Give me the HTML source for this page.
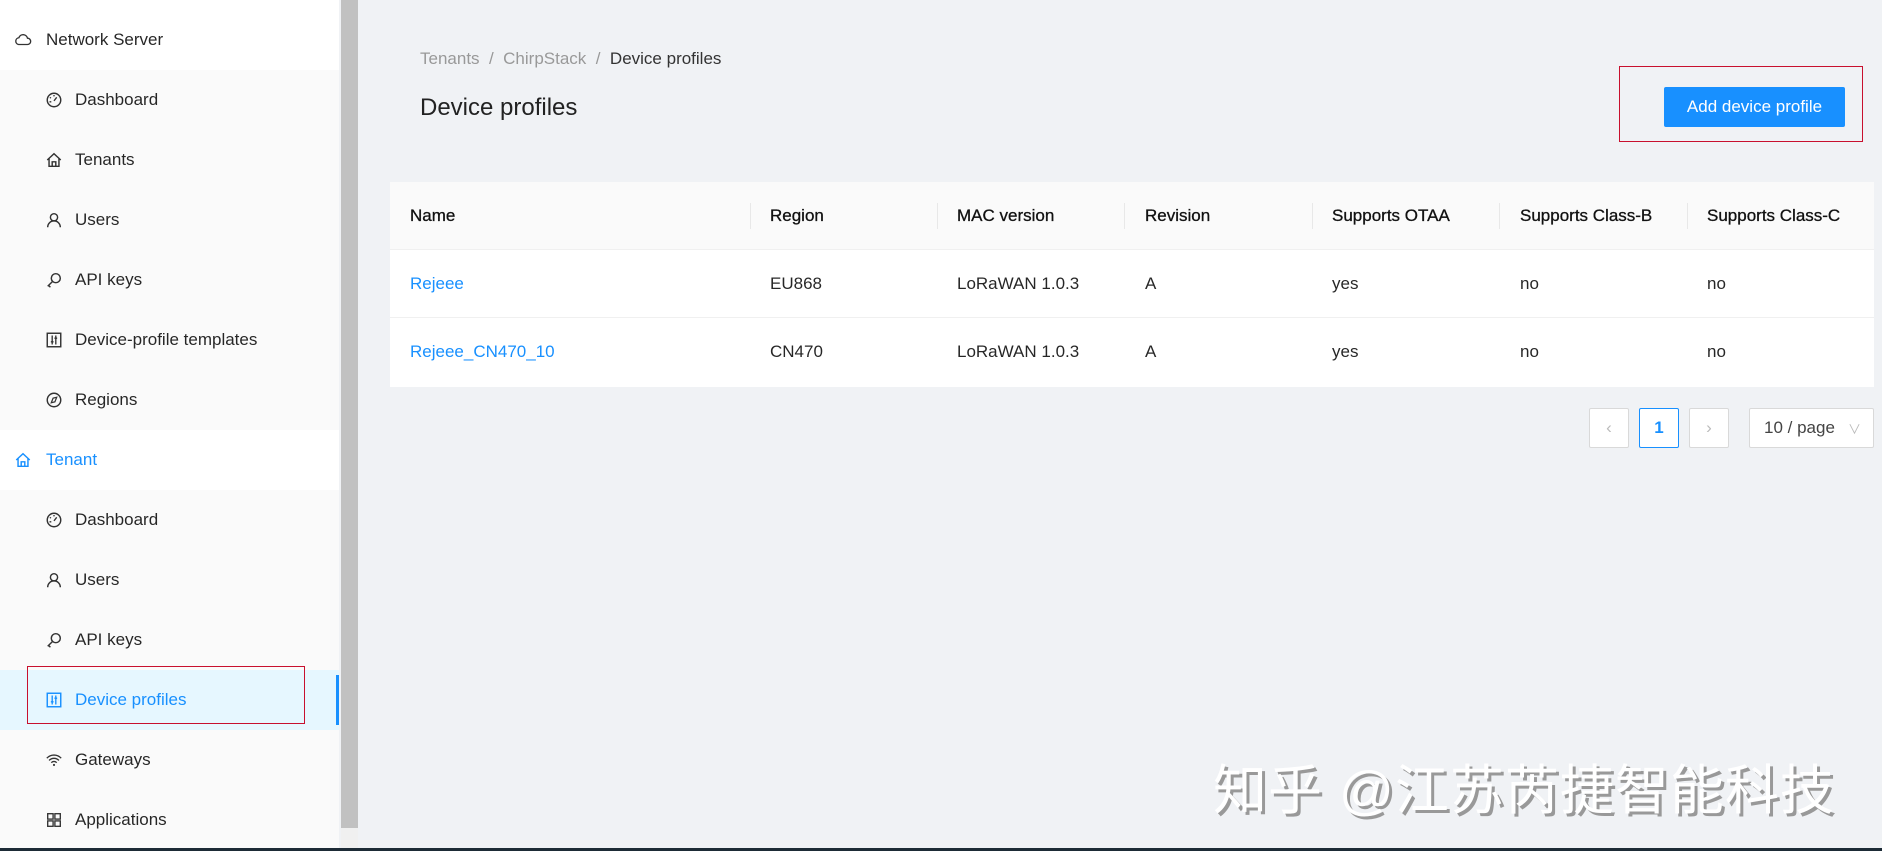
<!DOCTYPE html>
<html><head><meta charset="utf-8"><style>
*{box-sizing:border-box;margin:0;padding:0}
body{width:1882px;height:851px;overflow:hidden;background:#f0f2f5;font-family:"Liberation Sans","Noto Sans CJK SC",sans-serif;color:rgba(0,0,0,.85);position:relative;font-size:17px}
.side{position:absolute;left:0;top:0;width:339px;height:848px;background:#fafafa}
.hdr{position:absolute;left:0;width:339px;height:70px;background:#fff;display:flex;align-items:center;padding-left:14px}
.item{position:absolute;left:0;width:339px;height:60px;display:flex;align-items:center;padding-left:45px}
.ic{width:18px;height:18px;margin-right:12px;flex:none}
.hdr .ic{margin-right:14px}
.sb{position:absolute;left:341px;top:0;width:17px;height:848px;background:#f0f0f0}
.sb div{position:absolute;left:0;top:0;width:17px;height:828px;background:#c1c1c1}
.abs{position:absolute}
.tbl{position:absolute;left:390px;top:182px;width:1484px;background:#fff}
.row{position:absolute;left:0;width:1484px;border-bottom:1px solid #f0f0f0}
.c{position:absolute;top:0;height:100%;display:flex;align-items:center}
.sep{position:absolute;width:1px;height:26px;top:21px;background:#e8e8e8}
.pg{position:absolute;top:408px;height:40px;width:40px;border:1px solid #d9d9d9;background:#fff;border-radius:2px;display:flex;align-items:center;justify-content:center;color:#bbb}
</style></head><body>
<div class="side">
 <div class="hdr" style="top:0;padding-top:10px"><svg class="ic" viewBox="0 0 20 20"><path d="M5 15h10a3.5 3.5 0 0 0 0-7 5 5 0 0 0-9.6-.5A3.8 3.8 0 0 0 5 15z" fill="none" stroke="#333" stroke-width="1.5"/></svg>Network Server</div>
 <div class="item" style="top:70px"><svg class="ic" viewBox="0 0 20 20"><circle cx="10" cy="10" r="7.5" fill="none" stroke="#333" stroke-width="1.6"/><path d="M10 11l3-4M5 12h2M10 4.5v1.5M5.5 7l1 1" stroke="#333" stroke-width="1.5"/></svg>Dashboard</div>
 <div class="item" style="top:130px"><svg class="ic" viewBox="0 0 20 20"><path d="M2.5 10L10 3l7.5 7M4.5 8.5V17h11V8.5M8 17v-5h4v5" fill="none" stroke="#333" stroke-width="1.6"/></svg>Tenants</div>
 <div class="item" style="top:190px"><svg class="ic" viewBox="0 0 20 20"><circle cx="10" cy="7" r="4" fill="none" stroke="#333" stroke-width="1.6"/><path d="M3 18a7 7 0 0 1 14 0" fill="none" stroke="#333" stroke-width="1.6"/></svg>Users</div>
 <div class="item" style="top:250px"><svg class="ic" viewBox="0 0 20 20"><circle cx="12" cy="8" r="5" fill="none" stroke="#333" stroke-width="1.6"/><path d="M8.5 11.5L3 17M4 16l2 2" stroke="#333" stroke-width="1.6"/></svg>API keys</div>
 <div class="item" style="top:310px"><svg class="ic" viewBox="0 0 20 20"><rect x="2.5" y="2.5" width="15" height="15" fill="none" stroke="#333" stroke-width="1.6"/><path d="M8 5v10M12 5v10M6.5 12h3M10.5 8h3" stroke="#333" stroke-width="1.5"/></svg>Device-profile templates</div>
 <div class="item" style="top:370px"><svg class="ic" viewBox="0 0 20 20"><circle cx="10" cy="10" r="7.5" fill="none" stroke="#333" stroke-width="1.6"/><path d="M13 7l-2 5-4 1 2-5z" fill="none" stroke="#333" stroke-width="1.4"/></svg>Regions</div>
 <div class="hdr" style="top:430px;height:60px;color:#1890ff"><svg class="ic" viewBox="0 0 20 20"><path d="M2.5 10L10 3l7.5 7M4.5 8.5V17h11V8.5M8 17v-5h4v5" fill="none" stroke="#1890ff" stroke-width="1.6"/></svg>Tenant</div>
 <div class="item" style="top:490px"><svg class="ic" viewBox="0 0 20 20"><circle cx="10" cy="10" r="7.5" fill="none" stroke="#333" stroke-width="1.6"/><path d="M10 11l3-4M5 12h2M10 4.5v1.5M5.5 7l1 1" stroke="#333" stroke-width="1.5"/></svg>Dashboard</div>
 <div class="item" style="top:550px"><svg class="ic" viewBox="0 0 20 20"><circle cx="10" cy="7" r="4" fill="none" stroke="#333" stroke-width="1.6"/><path d="M3 18a7 7 0 0 1 14 0" fill="none" stroke="#333" stroke-width="1.6"/></svg>Users</div>
 <div class="item" style="top:610px"><svg class="ic" viewBox="0 0 20 20"><circle cx="12" cy="8" r="5" fill="none" stroke="#333" stroke-width="1.6"/><path d="M8.5 11.5L3 17M4 16l2 2" stroke="#333" stroke-width="1.6"/></svg>API keys</div>
 <div class="item" style="top:670px;background:#e6f7ff;color:#1890ff"><svg class="ic" viewBox="0 0 20 20"><rect x="2.5" y="2.5" width="15" height="15" fill="none" stroke="#1890ff" stroke-width="1.6"/><path d="M8 5v10M12 5v10M6.5 12h3M10.5 8h3" stroke="#1890ff" stroke-width="1.5"/></svg>Device profiles</div>
 <div class="abs" style="left:336px;top:675px;width:3px;height:50px;background:#1890ff"></div>
 <div class="abs" style="left:27px;top:666px;width:278px;height:58px;border:1px solid #c8102e"></div>
 <div class="item" style="top:730px"><svg class="ic" viewBox="0 0 20 20"><path d="M2 8a11 11 0 0 1 16 0M4.5 10.5a7.5 7.5 0 0 1 11 0M7 13a4 4 0 0 1 6 0" fill="none" stroke="#333" stroke-width="1.5"/><circle cx="10" cy="15.5" r="1.2" fill="#333"/></svg>Gateways</div>
 <div class="item" style="top:790px"><svg class="ic" viewBox="0 0 20 20"><rect x="3" y="3" width="6" height="6" fill="none" stroke="#333" stroke-width="1.5"/><rect x="11" y="3" width="6" height="6" fill="none" stroke="#333" stroke-width="1.5"/><rect x="3" y="11" width="6" height="6" fill="none" stroke="#333" stroke-width="1.5"/><rect x="11" y="11" width="6" height="6" fill="none" stroke="#333" stroke-width="1.5"/></svg>Applications</div>
</div>
<div class="sb"><div></div></div>
<div class="abs" style="left:0;top:848px;width:1882px;height:3px;background:#1d2b36"></div>

<div class="abs" style="left:420px;top:49px;font-size:17px;color:#999">Tenants &nbsp;/&nbsp; ChirpStack &nbsp;/&nbsp; <span style="color:#333">Device profiles</span></div>
<div class="abs" style="left:420px;top:94px;font-size:24px;color:#222">Device profiles</div>
<div class="abs" style="left:1619px;top:66px;width:244px;height:76px;border:1px solid #c8102e"></div>
<div class="abs" style="left:1664px;top:87px;width:181px;height:40px;background:#1890ff;border-radius:2px;color:#fff;display:flex;align-items:center;justify-content:center;font-size:17px">Add device profile</div>

<div class="tbl">
 <div class="row" style="top:0;height:68px;background:#fafafa;color:#111;-webkit-text-stroke:0.3px #111">
  <div class="c" style="left:20px">Name</div><div class="sep" style="left:360px"></div>
  <div class="c" style="left:380px">Region</div><div class="sep" style="left:547px"></div>
  <div class="c" style="left:567px">MAC version</div><div class="sep" style="left:734px"></div>
  <div class="c" style="left:755px">Revision</div><div class="sep" style="left:922px"></div>
  <div class="c" style="left:942px">Supports OTAA</div><div class="sep" style="left:1109px"></div>
  <div class="c" style="left:1130px">Supports Class-B</div><div class="sep" style="left:1297px"></div>
  <div class="c" style="left:1317px">Supports Class-C</div>
 </div>
 <div class="row" style="top:68px;height:68px">
  <div class="c" style="left:20px;color:#1890ff">Rejeee</div><div class="c" style="left:380px">EU868</div><div class="c" style="left:567px">LoRaWAN 1.0.3</div><div class="c" style="left:755px">A</div><div class="c" style="left:942px">yes</div><div class="c" style="left:1130px">no</div><div class="c" style="left:1317px">no</div>
 </div>
 <div class="row" style="top:136px;height:68px;border-bottom:none">
  <div class="c" style="left:20px;color:#1890ff">Rejeee_CN470_10</div><div class="c" style="left:380px">CN470</div><div class="c" style="left:567px">LoRaWAN 1.0.3</div><div class="c" style="left:755px">A</div><div class="c" style="left:942px">yes</div><div class="c" style="left:1130px">no</div><div class="c" style="left:1317px">no</div>
 </div>
 <div style="height:205px"></div>
</div>

<div class="pg" style="left:1589px">&#8249;</div>
<div class="pg" style="left:1639px;border-color:#1890ff;color:#1890ff;font-weight:600">1</div>
<div class="pg" style="left:1689px">&#8250;</div>
<div class="pg" style="left:1749px;width:125px;justify-content:flex-start;padding-left:14px;color:#444">10 / page<span style="position:absolute;right:12px;color:#bbb;font-size:13px">&#8744;</span></div>

<div class="abs" style="left:1213px;top:746px;font-size:54px;letter-spacing:1px;color:#fff;text-shadow:3px 3px 0 #999;font-family:'Liberation Sans','Noto Sans CJK SC',sans-serif">知乎 @江苏芮捷智能科技</div>
</body></html>
